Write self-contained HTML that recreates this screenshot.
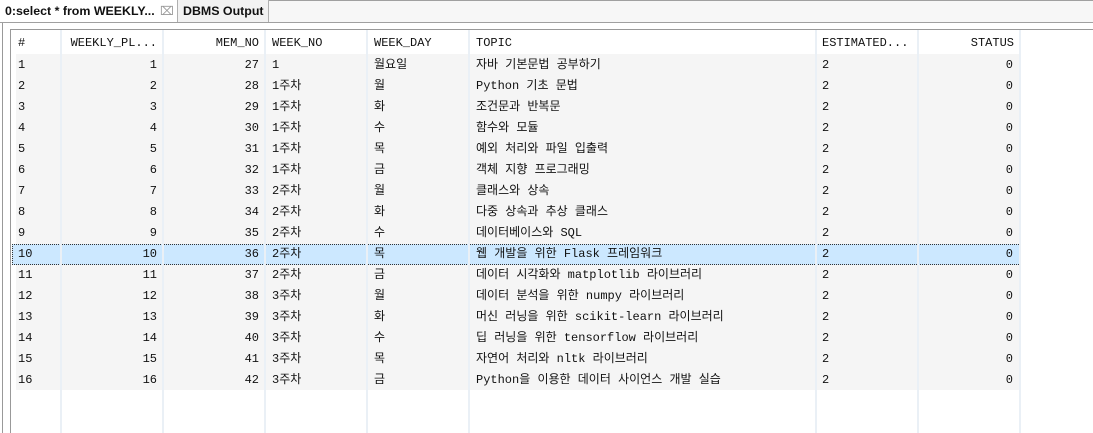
<!DOCTYPE html>
<html><head><meta charset="utf-8"><style>
*{margin:0;padding:0;box-sizing:border-box}
body{width:1093px;height:433px;background:#fff;position:relative;overflow:hidden;font-family:"Liberation Mono","Noto Sans CJK KR",monospace;font-size:12px;color:#111}
.tabbar{position:absolute;left:0;top:0;width:1093px;height:23px;background:#f7f7f7;border-top:1px solid #a0a0a0;border-bottom:1px solid #a0a0a0}
.tab{position:absolute;top:0;height:22px;font:bold 12.4px "Liberation Sans","Noto Sans CJK KR",sans-serif;line-height:22px;padding-left:5px;color:#111}
.t1{left:0;width:178px;background:#fff;border-right:1px solid #b0b0b0}
.t2{left:178px;width:91px;background:#f2f2f2;border-right:1px solid #b0b0b0}
.x{position:absolute;left:160px;top:0;color:#999;font-weight:normal;font-size:12px}
.ol{position:absolute;left:2px;top:23px;width:1px;height:410px;background:#999}
.il{position:absolute;left:10px;top:29px;width:1px;height:404px;background:#999}
.it{position:absolute;left:10px;top:29px;width:1083px;height:1px;background:#999}
.sep{position:absolute;top:30px;width:2px;height:403px;background:#eaf0f6}
.rowbg{position:absolute;left:16px;width:1004px;height:21px;background:#f5f5f5}
.c{position:absolute;white-space:nowrap;line-height:21px}
.r{text-align:right}
.sel{position:absolute;left:12px;top:244px;width:1009px;height:21px;background:#cce8ff;border:1px dotted #333}
</style></head><body>
<div class="tabbar"></div>
<div class="tab t1">0:select * from WEEKLY...<span class="x">⌧</span></div>
<div class="tab t2">DBMS Output</div>
<div class="ol"></div><div class="il"></div><div class="it"></div>
<div id="g"></div>
<script>
var rows=[
[1,1,27,"1","월요일","자바 기본문법 공부하기"],
[2,2,28,"1주차","월","Python 기초 문법"],
[3,3,29,"1주차","화","조건문과 반복문"],
[4,4,30,"1주차","수","함수와 모듈"],
[5,5,31,"1주차","목","예외 처리와 파일 입출력"],
[6,6,32,"1주차","금","객체 지향 프로그래밍"],
[7,7,33,"2주차","월","클래스와 상속"],
[8,8,34,"2주차","화","다중 상속과 추상 클래스"],
[9,9,35,"2주차","수","데이터베이스와 SQL"],
[10,10,36,"2주차","목","웹 개발을 위한 Flask 프레임워크"],
[11,11,37,"2주차","금","데이터 시각화와 matplotlib 라이브러리"],
[12,12,38,"3주차","월","데이터 분석을 위한 numpy 라이브러리"],
[13,13,39,"3주차","화","머신 러닝을 위한 scikit-learn 라이브러리"],
[14,14,40,"3주차","수","딥 러닝을 위한 tensorflow 라이브러리"],
[15,15,41,"3주차","목","자연어 처리와 nltk 라이브러리"],
[16,16,42,"3주차","금","Python을 이용한 데이터 사이언스 개발 실습"]];
var h='';
for(var i=0;i<16;i++){h+='<div class="rowbg" style="top:'+(54+i*21)+'px"></div>';}
h+='<div class="sel"></div>';
[60,162,264,366,468,815,917,1019].forEach(function(x){h+='<div class="sep" style="left:'+x+'px"></div>';});
function c(x,y,w,t,r){return '<div class="c'+(r?' r':'')+'" style="left:'+x+'px;top:'+y+'px;width:'+w+'px">'+t+'</div>';}
var hy=33;
h+=c(18,hy,40,'#')+c(64,hy,93,'WEEKLY_PL...',1)+c(166,hy,93,'MEM_NO',1)+c(272,hy,90,'WEEK_NO')+c(374,hy,90,'WEEK_DAY')+c(476,hy,300,'TOPIC')+c(822,hy,95,'ESTIMATED...')+c(921,hy,93,'STATUS',1);
rows.forEach(function(r,i){var y=55+i*21;
h+=c(18,y,40,r[0])+c(64,y,93,r[1],1)+c(166,y,93,r[2],1)+c(272,y,90,r[3])+c(374,y,90,r[4])+c(476,y,340,r[5])+c(822,y,90,'2')+c(921,y,92,'0',1);});
document.getElementById('g').innerHTML=h;
</script>
</body></html>
